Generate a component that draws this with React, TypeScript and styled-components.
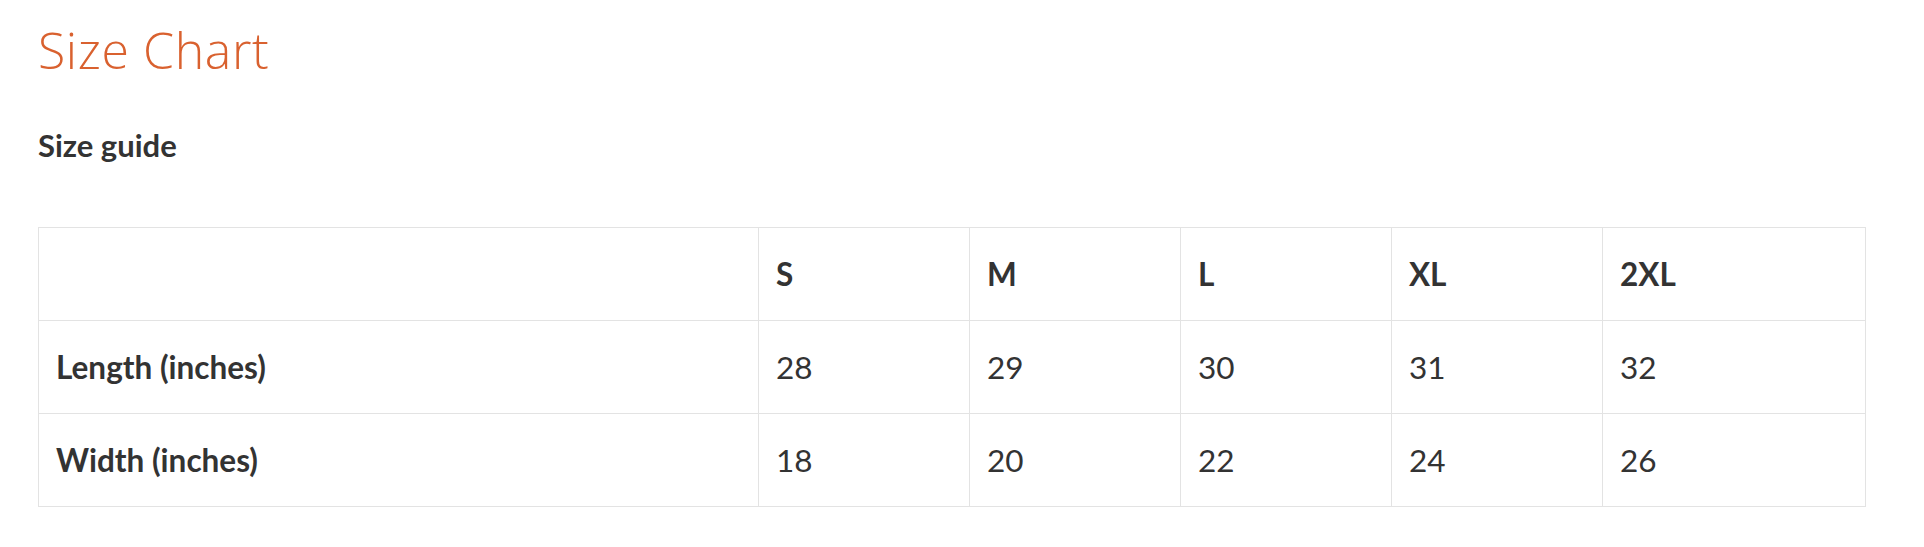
import styled, { createGlobalStyle } from 'styled-components';

const GlobalStyle = createGlobalStyle`
  body {
    margin: 0;
    background: #fff;
    font-family: Lato, "Liberation Sans", sans-serif;
    color: #333;
  }
`;

const sizes = ['S', 'M', 'L', 'XL', '2XL'];
const colWidths = [720, 211, 211, 211, 211, 263];
const rows = [
  { label: 'Length (inches)', values: [28, 29, 30, 31, 32] },
  { label: 'Width (inches)', values: [18, 20, 22, 24, 26] },
];

const App = () => {
  return (
    <>
      <GlobalStyle />
      <Page>
        <Title>Size Chart</Title>
        <Subtitle>Size guide</Subtitle>
        <Table>
          <colgroup>
            {colWidths.map((w, i) => (
              <col key={i} style={{ width: w }} />
            ))}
          </colgroup>
          <tbody>
            <Row>
              <Cell />
              {sizes.map((s) => (
                <Cell key={s} bold>
                  {s}
                </Cell>
              ))}
            </Row>
            {rows.map((r) => (
              <Row key={r.label}>
                <Cell bold>{r.label}</Cell>
                {r.values.map((v, i) => (
                  <Cell key={i}>{v}</Cell>
                ))}
              </Row>
            ))}
          </tbody>
        </Table>
      </Page>
    </>
  );
};
export default App;

const Page = styled.div`
  padding: 16px 59px 0 38px;
`;

const Title = styled.h1`
  margin: 0;
  font-family: 'Open Sans', 'Noto Sans', sans-serif;
  font-weight: 300;
  font-size: 50px;
  line-height: 68px;
  color: #d9612f;
  letter-spacing: 0.6px;
`;

const Subtitle = styled.h3`
  margin: 41px 0 0;
  font-family: Lato, sans-serif;
  font-weight: 700;
  font-size: 31px;
  line-height: 40px;
  color: #333;
`;

const Table = styled.table`
  margin-top: 62px;
  width: 1827px;
  border-collapse: collapse;
  table-layout: fixed;
  border: 1px solid #e3e3e3;
`;

const Row = styled.tr`
  height: 93px;
`;

const Cell = styled.td<{ bold?: boolean }>`
  border: 1px solid #e3e3e3;
  padding: 0 0 0 17px;
  font-family: Lato, sans-serif;
  font-size: 31.5px;
  font-weight: ${({ bold }) => (bold ? 700 : 400)};
  color: #333;
  vertical-align: middle;
`;
